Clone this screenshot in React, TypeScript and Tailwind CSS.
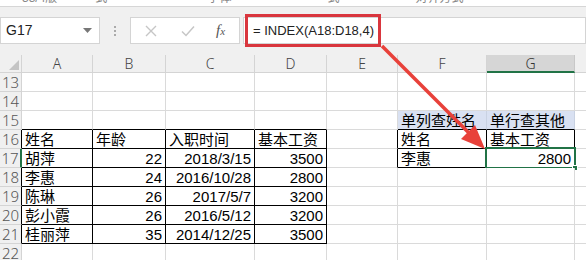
import React from 'react';

const FONT = { fontFamily: '"Liberation Sans", "Noto Sans CJK SC", sans-serif' };

const COLS = ['A', 'B', 'C', 'D', 'E', 'F', 'G'];

type Cell = { v: string; right?: boolean };

const DATA: Record<number, Record<string, Cell>> = {
  15: { F: { v: '单列查姓名' }, G: { v: '单行查其他' } },
  16: {
    A: { v: '姓名' },
    B: { v: '年龄' },
    C: { v: '入职时间' },
    D: { v: '基本工资' },
    F: { v: '姓名' },
    G: { v: '基本工资' },
  },
  17: {
    A: { v: '胡萍' },
    B: { v: '22', right: true },
    C: { v: '2018/3/15', right: true },
    D: { v: '3500', right: true },
    F: { v: '李惠' },
    G: { v: '2800', right: true },
  },
  18: {
    A: { v: '李惠' },
    B: { v: '24', right: true },
    C: { v: '2016/10/28', right: true },
    D: { v: '2800', right: true },
  },
  19: {
    A: { v: '陈琳' },
    B: { v: '26', right: true },
    C: { v: '2017/5/7', right: true },
    D: { v: '3200', right: true },
  },
  20: {
    A: { v: '彭小霞' },
    B: { v: '26', right: true },
    C: { v: '2016/5/12', right: true },
    D: { v: '3200', right: true },
  },
  21: {
    A: { v: '桂丽萍' },
    B: { v: '35', right: true },
    C: { v: '2014/12/25', right: true },
    D: { v: '3500', right: true },
  },
};

const ROWS = [13, 14, 15, 16, 17, 18, 19, 20, 21, 22];

const inMain = (c: string) => ['A', 'B', 'C', 'D'].includes(c);
const inLookup = (c: string) => c === 'F' || c === 'G';

function bottomBlack(r: number, c: string) {
  return (r >= 15 && r <= 21 && inMain(c)) || (r >= 15 && r <= 17 && inLookup(c));
}

function rightBlack(r: number, c: string) {
  return (r >= 16 && r <= 21 && inMain(c)) || (r >= 16 && r <= 17 && ['E', 'F', 'G'].includes(c));
}

const Sheet = () => (
  <div className="grid grid-cols-[22px_71px_73px_89px_72px_71px_89px_88px_11px]">
    {/* column headers */}
    <div className="relative h-[18px] bg-[#f0f0f0] border-r border-b border-[#d4d4d4]">
      <svg className="absolute right-[2px] bottom-[2px]" width="10" height="10" viewBox="0 0 10 10">
        <polygon points="10,0 10,10 0,10" fill="#c4c4c4" />
      </svg>
    </div>
    {COLS.map((c) => (
      <div
        key={c}
        className={
          c === 'G'
            ? 'h-[18px] bg-[#d6d6d6] border-r border-[#c8c8c8] border-b-2 border-b-[#217346] text-center text-[14px] leading-[17px] text-[#333]'
            : 'h-[18px] bg-[#f0f0f0] border-r border-b border-[#d4d4d4] text-center text-[14px] leading-[17px] text-[#444]'
        }
        style={{ fontFamily: '"Noto Sans", sans-serif', fontWeight: 300 }}
      >
        {c}
      </div>
    ))}
    <div className="h-[18px] bg-[#f0f0f0] border-b border-[#d4d4d4]" />

    {ROWS.map((r) => (
      <React.Fragment key={r}>
        <div
          className={`h-[19px] bg-[#f0f0f0] border-b border-[#d4d4d4] text-center text-[15px] leading-[19px] text-[#555] overflow-hidden ${
            r === 17 ? 'border-r-2 border-r-[#217346] bg-[#e1e1e1]' : r >= 16 && r <= 21 ? 'border-r border-r-black' : 'border-r border-r-[#d4d4d4]'
          }`}
          style={{ fontFamily: '"Noto Sans", sans-serif', fontWeight: 300 }}
        >
          {r}
        </div>
        {COLS.map((c) => {
          const cell = DATA[r]?.[c];
          const blue = r === 15 && inLookup(c);
          const selected = r === 17 && c === 'G';
          return (
            <div
              key={c}
              className={`relative h-[19px] border-r border-b px-[3px] text-[15px] leading-[19px] text-black whitespace-nowrap ${
                blue ? 'bg-[#d9e1f2]' : 'bg-white'
              } ${rightBlack(r, c) ? 'border-r-black' : blue ? 'border-r-[#c9d2e2]' : 'border-r-[#dadada]'} ${
                bottomBlack(r, c) ? 'border-b-black' : 'border-b-[#dadada]'
              } ${cell?.right ? 'text-right' : 'text-left'}`}
              style={FONT}
            >
              {cell?.v}
              {selected && (
                <div className="absolute -left-[2px] -top-[2px] w-[91px] h-[22px] border-2 border-[#217346]">
                  <div className="absolute -right-[4px] -bottom-[4px] w-[6px] h-[6px] bg-[#217346] border border-white" />
                </div>
              )}
            </div>
          );
        })}
        <div className="h-[19px] bg-white border-b border-[#dadada]" />
      </React.Fragment>
    ))}
  </div>
);

export default function App() {
  return (
    <div className="relative w-[586px] h-[260px] overflow-hidden bg-[#f0f0f0]">
      {/* bottom edge of the ribbon */}
      <div className="h-[7px] bg-white border-b border-[#d6d6d6] overflow-hidden">
        <div className="flex -mt-[11px] text-[12px] text-[#888] whitespace-nowrap" style={FONT}>
          <span className="ml-[22px]">33/4版</span>
          <span className="ml-[38px]">式</span>
          <span className="ml-[100px]">字体</span>
          <span className="ml-[96px]">式</span>
          <span className="ml-[76px]">对齐方式</span>
        </div>
      </div>

      {/* formula bar */}
      <div className="flex items-start h-[48px] pt-[10px]">
        <div className="flex items-center justify-between w-[100px] h-[27px] bg-white border border-[#d4d4d4] pl-[5px] pr-[7px]">
          <span className="text-[14px] text-[#222]" style={FONT}>G17</span>
          <svg width="9" height="5" viewBox="0 0 9 5">
            <polygon points="0,0 9,0 4.5,5" fill="#777" />
          </svg>
        </div>
        <div className="flex flex-col items-center justify-center gap-[2px] w-[30px] h-[27px]">
          <div className="w-[2px] h-[2px] bg-[#aaa]" />
          <div className="w-[2px] h-[2px] bg-[#aaa]" />
          <div className="w-[2px] h-[2px] bg-[#aaa]" />
        </div>
        <div className="flex items-center w-[110px] h-[27px] bg-white border border-[#d4d4d4] pl-[14px]">
          <svg width="12" height="12" viewBox="0 0 12 12">
            <path d="M1 1 L11 11 M11 1 L1 11" stroke="#c6c6c6" strokeWidth="1.4" />
          </svg>
          <svg className="ml-[24px]" width="14" height="12" viewBox="0 0 14 12">
            <path d="M1 6.5 L5 10.5 L13 1.5" stroke="#c6c6c6" strokeWidth="1.5" fill="none" />
          </svg>
          <span
            className="ml-[21px] text-[15px] italic text-[#555]"
            style={{ fontFamily: '"Liberation Serif", serif' }}
          >
            f<span className="text-[11px]">x</span>
          </span>
        </div>
        <div className="relative flex-1 h-[27px] ml-[3px] bg-white border border-[#d4d4d4]">
          <div className="absolute left-[1px] -top-[4px] w-[136px] h-[33px] border-[3px] border-[#d9363e] flex items-center pl-[5px]">
            <span className="text-[13px] text-[#222] whitespace-nowrap" style={FONT}>
              = INDEX(A18:D18,4)
            </span>
          </div>
        </div>
      </div>

      <Sheet />

      {/* annotation arrow */}
      <svg className="absolute left-0 top-0 pointer-events-none" width="586" height="260" viewBox="0 0 586 260">
        <line x1="382" y1="46" x2="469" y2="133" stroke="#e8413a" strokeWidth="3.5" />
        <polygon points="485,149 461,139 475,125" fill="#e8413a" />
      </svg>
    </div>
  );
}
